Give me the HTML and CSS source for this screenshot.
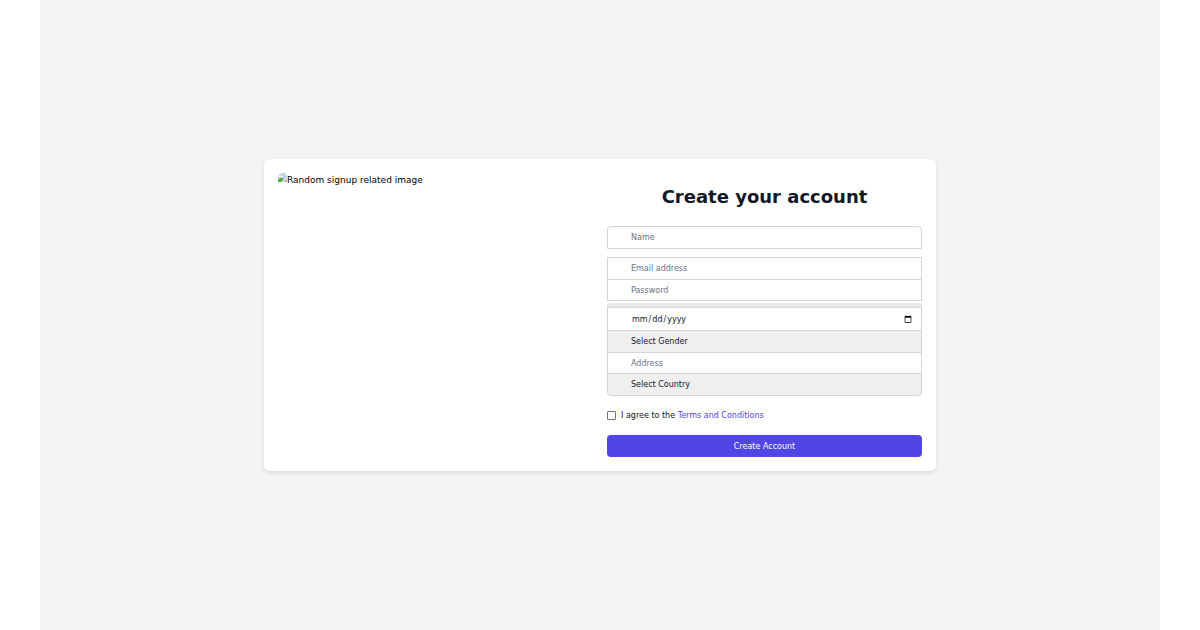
FILE: index.html
```
<!DOCTYPE html>
<html lang="en">
<head>
    <meta charset="UTF-8">
    <meta name="viewport" content="width=device-width, initial-scale=1.0">
    <title>Create your account</title>
    <link rel="stylesheet" href="styles.css">
</head>
<body>

    <main class="page">
        <div class="card">
            <!-- Picture side -->
            <div class="picture">
                <svg class="picture-icon" viewBox="0 0 9 9" aria-hidden="true">
                    <path d="M0 0h6l3 3v1L4 9H0z" fill="#c3d4f3"/>
                    <path d="M6 0v3h3z" fill="#f1f3f7" stroke="#a9adb5" stroke-width=".5"/>
                    <path d="M1 4q0-1 1-1 1-1 2 0 1 0 1 1z" fill="#fff"/>
                    <path d="M0 9V7q2-3 4-2l2 1-3 3z" fill="#4caf3c"/>
                    <path d="M5 9l4-4v4z" fill="#b9bcc2"/>
                </svg>
                <span>Random signup related image</span>
            </div>

            <!-- Form side -->
            <div class="signup">
                <h1>Create your account</h1>
                <form>
                    <input class="field field-name" type="text" placeholder="Name" aria-label="Name">
                    <input class="field" type="email" placeholder="Email address" aria-label="Email address">
                    <input class="field field-short" type="password" placeholder="Password" aria-label="Password">
                    <div class="strength"></div>
                    <input class="field field-date" type="date" aria-label="Date of birth">
                    <select class="field field-joined" aria-label="Gender">
                        <option>Select Gender</option>
                        <option>Male</option>
                        <option>Female</option>
                        <option>Other</option>
                    </select>
                    <input class="field field-short" type="text" placeholder="Address" aria-label="Address">
                    <select class="field field-joined field-last" aria-label="Country">
                        <option>Select Country</option>
                        <option>Canada</option>
                        <option>United States</option>
                    </select>
                    <div class="terms">
                        <input type="checkbox" id="terms">
                        <label for="terms">I agree to the <a href="#">Terms and Conditions</a></label>
                    </div>
                    <button class="btn" type="submit">Create Account</button>
                </form>
            </div>
        </div>
    </main>

</body>
</html>
```

FILE: styles.css
```
* {
    box-sizing: border-box;
}
body {
    font-family: "DejaVu Sans", sans-serif;
    font-size: 9px;
    color: #000;
    background-color: #fff;
    margin: 0;
}
.page {
    display: flex;
    align-items: center;
    justify-content: center;
    max-width: 1120px;
    min-height: 100vh;
    margin: 0 auto;
    background-color: #f3f4f6;
}
.card {
    display: grid;
    grid-template-columns: 1fr 1fr;
    gap: 14px;
    width: 60%;
    padding: 14px;
    border-radius: 6px;
    background-color: #fff;
    box-shadow: 0 2px 4px rgba(0, 0, 0, 0.1);
}
.picture {
    display: flex;
    align-items: flex-start;
    line-height: 14px;
    border-radius: 5px;
    overflow: hidden;
}
.picture-icon {
    width: 9px;
    height: 9px;
}
h1 {
    margin: 12px 0 17px;
    font-size: 18px;
    line-height: 24px;
    text-align: center;
    color: #111827;
}
form {
    display: flex;
    flex-direction: column;
}
.field {
    appearance: none;
    width: 100%;
    height: 23px;
    margin: 0;
    padding: 0 7px 0 23px;
    border: 1px solid #d1d5db;
    border-radius: 0;
    font-family: inherit;
    font-size: 8px;
    color: #111827;
    background-color: #fff;
}
.field::placeholder {
    color: #6b7280;
}
select.field {
    background-color: #efefef;
}
.field-name {
    margin-bottom: 8px;
    border-radius: 4px 4px 0 0;
}
.field-joined {
    margin-top: -1px;
}
.field-short {
    height: 22px;
    margin-top: -1px;
}
.strength {
    height: 5px;
    margin-top: 2px;
    border-radius: 3px 3px 0 0;
    background-color: #e5e7eb;
}
.field-date {
    height: 24px;
    margin-top: -1px;
}
.field-last {
    border-radius: 0 0 4px 4px;
}
.terms {
    display: flex;
    align-items: center;
    gap: 5px;
    margin: 14px 0;
    font-size: 8px;
    line-height: 11px;
    color: #111827;
}
.terms input {
    appearance: none;
    width: 9px;
    height: 9px;
    margin: 0;
    border: 1px solid #767676;
    border-radius: 1px;
    background-color: #fff;
}
.terms input:checked {
    border-color: #4f46e5;
    background-color: #4f46e5;
}
.terms a {
    color: #4f46e5;
    text-decoration: none;
}
.btn {
    height: 22px;
    padding: 0;
    border: none;
    border-radius: 4px;
    font-family: inherit;
    font-size: 8px;
    color: #fff;
    background-color: #4f46e5;
    cursor: pointer;
}
.btn:hover {
    background-color: #4338ca;
}
```
